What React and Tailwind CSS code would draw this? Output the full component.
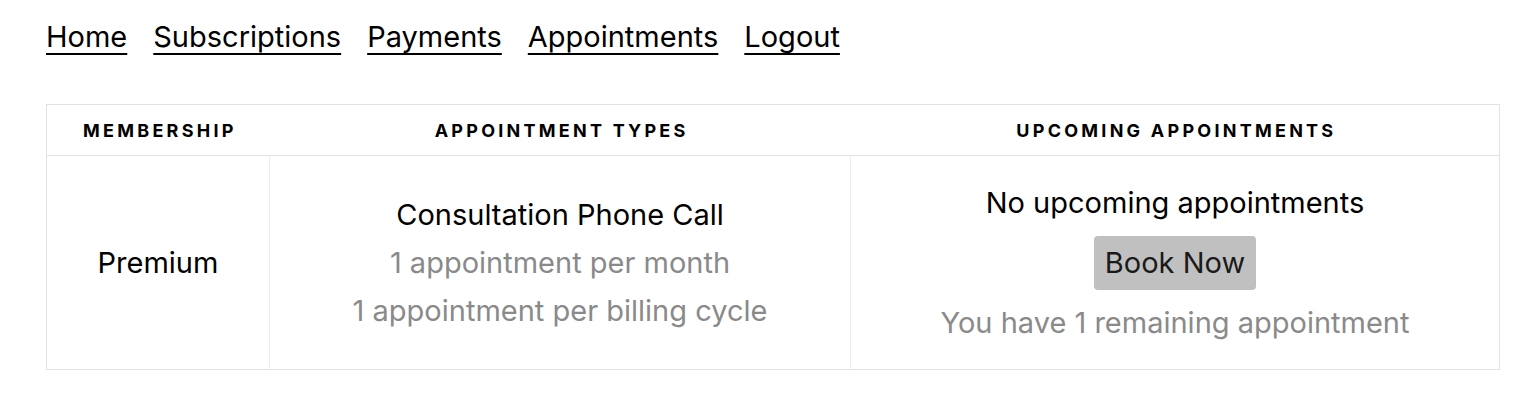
import React from "react";

const links = ["Home", "Subscriptions", "Payments", "Appointments", "Logout"];

const App = () => {
  return (
    <div className="min-h-screen bg-white px-[46px] pt-[17px] font-['Inter',sans-serif] text-black">
      {/* top nav */}
      <nav className="flex gap-[26px] text-[29px] leading-[40px]">
        {links.map((link) => (
          <a key={link} href="#" className="underline underline-offset-[6px] decoration-[1.5px]">
            {link}
          </a>
        ))}
      </nav>

      <table className="mt-[47px] w-[1454px] border-collapse border border-[#e2e2e2] text-center">
        <thead>
          <tr className="border-b border-[#e2e2e2] h-[51px] text-[18px] font-bold tracking-[0.18em]">
            <th className="w-[223px] pl-[0.18em]">MEMBERSHIP</th>
            <th className="w-[581px] pl-[0.18em]">APPOINTMENT TYPES</th>
            <th className="pl-[0.18em]">UPCOMING APPOINTMENTS</th>
          </tr>
        </thead>
        <tbody>
          <tr className="h-[214px] text-[29px] leading-[48px]">
            <td className="border-r border-[#ececec]">Premium</td>
            <td className="border-r border-[#ececec]">
              <div>Consultation Phone Call</div>
              <div className="text-[#8a8a8a]">1 appointment per month</div>
              <div className="text-[#8a8a8a]">1 appointment per billing cycle</div>
            </td>
            <td>
              <div>No upcoming appointments</div>
              <button className="my-[9px] rounded-[4px] bg-[#c0c0c0] px-[11px] py-[10px] leading-[34px] text-[#1a1a1a]">
                Book Now
              </button>
              <div className="text-[#8a8a8a]">You have 1 remaining appointment</div>
            </td>
          </tr>
        </tbody>
      </table>
    </div>
  );
};

export default App;
